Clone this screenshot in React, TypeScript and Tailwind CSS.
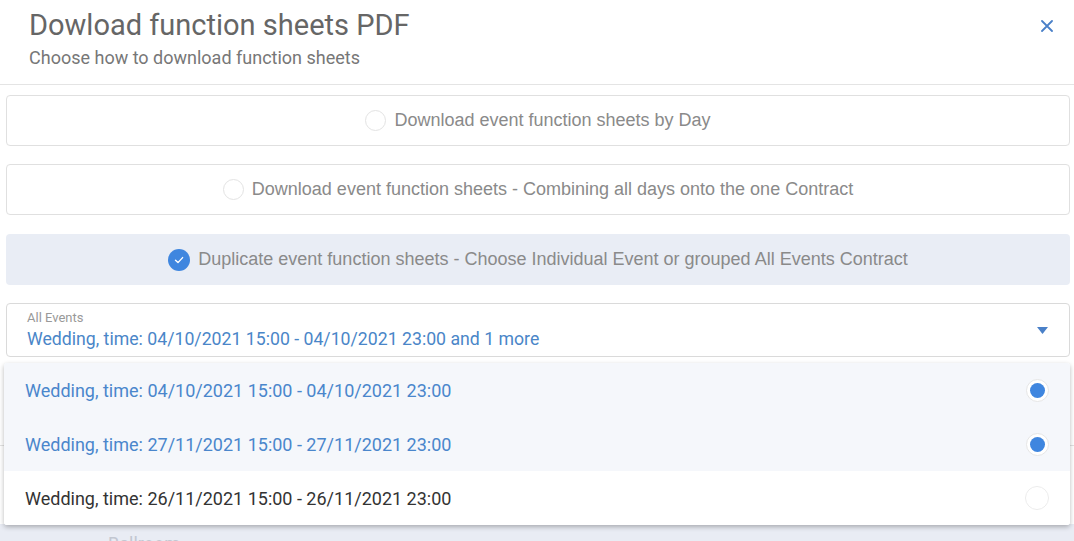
import React from 'react';

interface EventOption {
  label: string;
  selected: boolean;
}

const events: EventOption[] = [
  { label: 'Wedding, time: 04/10/2021 15:00 - 04/10/2021 23:00', selected: true },
  { label: 'Wedding, time: 27/11/2021 15:00 - 27/11/2021 23:00', selected: true },
  { label: 'Wedding, time: 26/11/2021 15:00 - 26/11/2021 23:00', selected: false },
];

const roboto = "font-['Roboto',sans-serif]";
const arial = "font-['Liberation_Sans',Arial,sans-serif]";

const EmptyRadio = () => (
  <span className="inline-block w-[21px] h-[21px] rounded-full border border-[#e3e3e3] bg-white" />
);

const CheckedRadio = () => (
  <span className="inline-flex items-center justify-center w-[22px] h-[22px] rounded-full bg-[#3f86df]">
    <svg width="12" height="12" viewBox="0 0 12 12" fill="none">
      <path d="M2.5 6.2 L5 8.6 L9.6 3.6" stroke="white" strokeWidth="1.4" strokeLinecap="round" strokeLinejoin="round" />
    </svg>
  </span>
);

const OptionRow: React.FC<{ label: string; checked?: boolean }> = ({ label, checked }) => (
  <div
    className={`h-[51px] rounded-[4px] flex items-center justify-center gap-[8px] ${
      checked ? 'bg-[#e9edf5]' : 'bg-white border border-[#e0e0e0]'
    }`}
  >
    {checked ? <CheckedRadio /> : <EmptyRadio />}
    <span className={`${arial} text-[18px] text-[#8a8a8a]`}>{label}</span>
  </div>
);

const MenuItem: React.FC<{ item: EventOption }> = ({ item }) => (
  <div
    className={`h-[54px] flex items-center justify-between pl-[21px] pr-[21px] ${
      item.selected ? 'bg-[#f5f7fb]' : 'bg-white'
    }`}
  >
    <span className={`${roboto} text-[18px] ${item.selected ? 'text-[#4a86cc]' : 'text-[#333333]'}`}>
      {item.label}
    </span>
    {item.selected ? (
      <span className="w-[23px] h-[23px] rounded-full bg-white border border-[#e6e6e6] flex items-center justify-center">
        <span className="w-[15px] h-[15px] rounded-full bg-[#3f86df]" />
      </span>
    ) : (
      <span className="w-[24px] h-[24px] rounded-full border border-[#ececec] bg-white" />
    )}
  </div>
);

export default function App() {
  return (
    <div className="w-full h-[541px] overflow-hidden bg-white">
      <div className="flex justify-between border-b border-[#e4e4e4] pl-[29px] pr-[20px] pt-[8px] pb-[15px]">
        <div>
          <h1 className={`${roboto} text-[29px] leading-[34px] text-[#666666]`}>Dowload function sheets PDF</h1>
          <p className={`${roboto} text-[18px] leading-[22px] mt-[5px] text-[#777777]`}>
            Choose how to download function sheets
          </p>
        </div>
        <button className="mt-[11px] h-[14px] w-[14px] flex items-center justify-center">
          <svg width="12" height="12" viewBox="0 0 12 12">
            <path d="M1 1 L11 11 M11 1 L1 11" stroke="#4a80c8" strokeWidth="1.8" strokeLinecap="round" />
          </svg>
        </button>
      </div>

      <div className="pl-[6px] pr-[4px] pt-[10px] flex flex-col">
        <OptionRow label="Download event function sheets by Day" />
        <div className="mt-[18px]">
          <OptionRow label="Download event function sheets - Combining all days onto the one Contract" />
        </div>
        <div className="mt-[19px]">
          <OptionRow checked label="Duplicate event function sheets - Choose Individual Event or grouped All Events Contract" />
        </div>

        <div className="relative mt-[18px]">
          <div className="h-[54px] rounded-[4px] border border-[#dadada] bg-white flex items-center justify-between pl-[20px] pr-[21px]">
            <div className="flex flex-col">
              <span className={`${roboto} text-[13px] leading-[15px] text-[#999999]`}>All Events</span>
              <span className={`${roboto} text-[17.7px] leading-[22px] mt-[3px] text-[#4a86c8]`}>
                Wedding, time: 04/10/2021 15:00 - 04/10/2021 23:00 and 1 more
              </span>
            </div>
            <svg width="11" height="7" viewBox="0 0 11 7">
              <path d="M0 0 L11 0 L5.5 7 Z" fill="#4a80c8" />
            </svg>
          </div>

          <div className="absolute z-10 left-[-2px] right-0 top-[60px] rounded-[3px] bg-white overflow-hidden shadow-[0_2px_5px_rgba(0,0,0,0.28)]">
            {events.map((item) => (
              <MenuItem key={item.label} item={item} />
            ))}
          </div>
        </div>
      </div>

      <div className="mt-[88px] border-t border-[#e2e2e2] h-[79px]" />
      <div className="bg-[#e9ecf4] h-[40px] pl-[108px] pt-[6px]">
        <span className={`${roboto} text-[18px] text-[#c3c7d1]`}>Ballroom</span>
      </div>
    </div>
  );
}
